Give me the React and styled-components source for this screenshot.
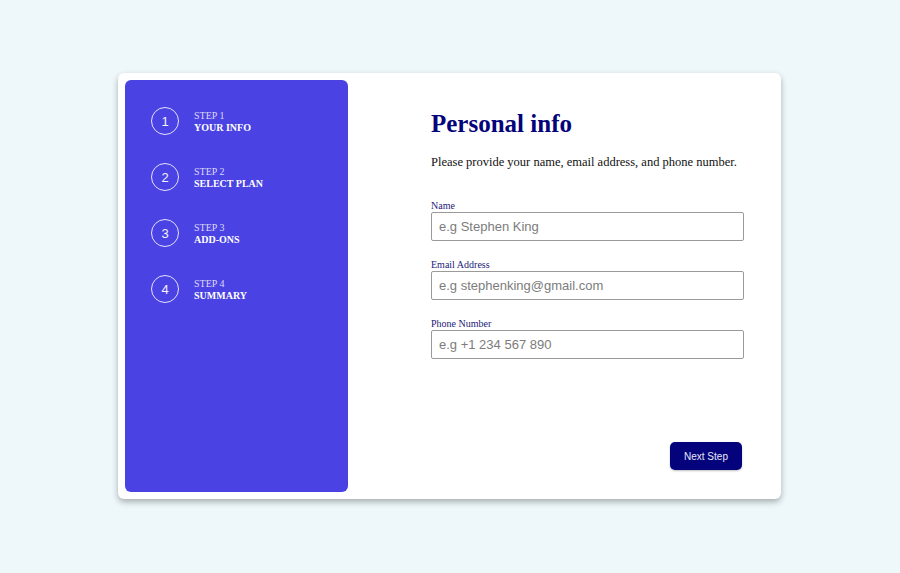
import React from "react";
import styled, { createGlobalStyle } from "styled-components";

const steps = [
  { n: 1, title: "YOUR INFO" },
  { n: 2, title: "SELECT PLAN" },
  { n: 3, title: "ADD-ONS" },
  { n: 4, title: "SUMMARY" },
];

const fields = [
  { label: "Name", placeholder: "e.g Stephen King", type: "text" },
  { label: "Email Address", placeholder: "e.g stephenking@gmail.com", type: "email" },
  { label: "Phone Number", placeholder: "e.g +1 234 567 890", type: "tel" },
];

const App = () => {
  return (
    <>
      <GlobalStyle />
      <Page>
        <Card>
          <Sidebar>
            {steps.map(s => (
              <Step key={s.n}>
                <Circle>{s.n}</Circle>
                <StepText>
                  <StepNum>STEP {s.n}</StepNum>
                  <StepTitle>{s.title}</StepTitle>
                </StepText>
              </Step>
            ))}
          </Sidebar>
          <Main>
            <Title>Personal info</Title>
            <Lead>Please provide your name, email address, and phone number.</Lead>
            <Form onSubmit={e => e.preventDefault()}>
              {fields.map(f => (
                <Field key={f.label}>
                  <Label>{f.label}</Label>
                  <Input type={f.type} placeholder={f.placeholder} />
                </Field>
              ))}
              <Footer>
                <NextButton type="submit">Next Step</NextButton>
              </Footer>
            </Form>
          </Main>
        </Card>
      </Page>
    </>
  );
};

export default App;

const GlobalStyle = createGlobalStyle`
  html, body {
    margin: 0;
    padding: 0;
    background: #eef8fa;
  }
  body {
    font-family: "Liberation Serif", "Times New Roman", serif;
  }
  * {
    box-sizing: border-box;
  }
`;

const Page = styled.div`
  min-height: 100vh;
  padding: 0 1px 1px 0;
  display: flex;
  align-items: center;
  justify-content: center;
`;

const Card = styled.div`
  width: 663px;
  height: 426px;
  padding: 7px;
  background: #fff;
  border-radius: 6px;
  box-shadow: 0 3px 6px rgba(0, 0, 0, 0.3);
  display: flex;
`;

const Sidebar = styled.div`
  width: 223px;
  flex-shrink: 0;
  background: #4a42e2;
  border-radius: 6px;
  padding: 27px 26px;
  display: flex;
  flex-direction: column;
  gap: 28px;
`;

const Step = styled.div`
  display: flex;
  align-items: center;
  gap: 15px;
`;

const Circle = styled.div`
  width: 28px;
  height: 28px;
  border-radius: 50%;
  border: 1px solid #e4e2fb;
  color: #f4f4fd;
  display: flex;
  align-items: center;
  justify-content: center;
  font-family: "Liberation Sans", Arial, sans-serif;
  font-size: 13px;
`;

const StepText = styled.div`
  display: flex;
  flex-direction: column;
  font-size: 10px;
  line-height: 12px;
  padding-top: 1px;
`;

const StepNum = styled.span`
  color: #dcdaf8;
`;

const StepTitle = styled.span`
  color: #fff;
  font-weight: bold;
`;

const Main = styled.div`
  flex: 1;
  display: flex;
  flex-direction: column;
  padding: 29px 30px 22px 83px;
`;

const Title = styled.h1`
  margin: 0;
  font-size: 25px;
  line-height: 30px;
  color: #04037a;
  font-weight: bold;
`;

const Lead = styled.p`
  margin: 14px 0 0;
  font-size: 12.5px;
  line-height: 18px;
  white-space: nowrap;
  color: #111;
`;

const Form = styled.form`
  flex: 1;
  display: flex;
  flex-direction: column;
  gap: 18px;
  margin-top: 29px;
  width: 313px;
`;

const Field = styled.div`
  display: flex;
  flex-direction: column;
`;

const Label = styled.label`
  font-size: 10px;
  line-height: 12px;
  color: #1d1a78;
`;

const Input = styled.input`
  height: 29px;
  width: 100%;
  border: 1px solid #9a9a9a;
  border-radius: 2px;
  padding: 0 7px;
  font-family: "Liberation Sans", Arial, sans-serif;
  font-size: 13px;
  color: #222;
  outline: none;
  &::placeholder {
    color: #7c7c7c;
  }
`;

const Footer = styled.div`
  margin-top: auto;
  display: flex;
  justify-content: flex-end;
  padding-right: 2px;
`;

const NextButton = styled.button`
  width: 72px;
  height: 28px;
  border: none;
  border-radius: 5px;
  background: #04037c;
  color: #e8e8f8;
  font-family: "Liberation Sans", Arial, sans-serif;
  font-size: 10px;
  box-shadow: 0 1px 2px rgba(0, 0, 0, 0.25);
  cursor: pointer;
`;
